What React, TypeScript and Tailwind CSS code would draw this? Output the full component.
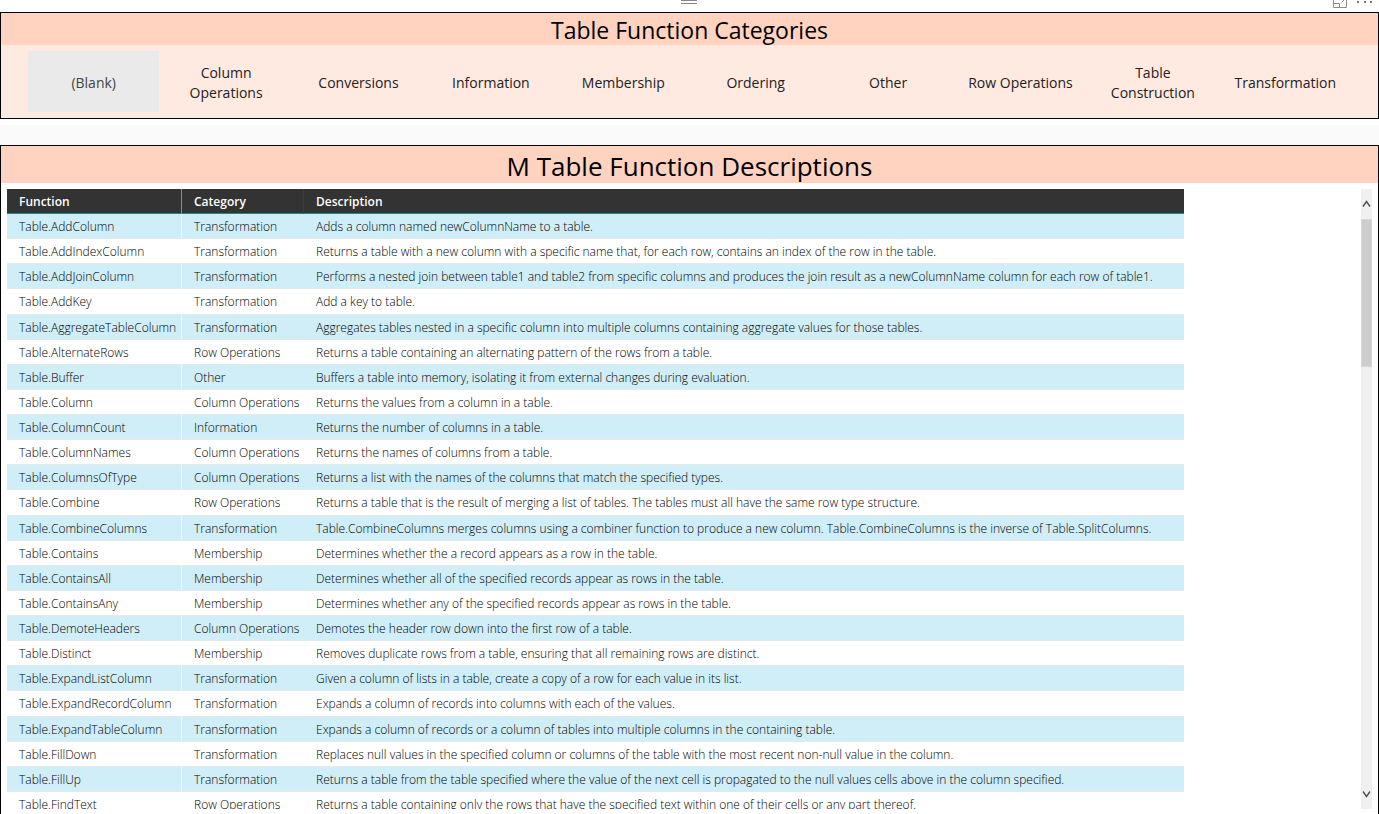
import { useState } from "react";

const categories = [
  "(Blank)",
  "Column Operations",
  "Conversions",
  "Information",
  "Membership",
  "Ordering",
  "Other",
  "Row Operations",
  "Table Construction",
  "Transformation",
];

const functions: [string, string, string][] = [
  ["Table.AddColumn", "Transformation", "Adds a column named newColumnName to a table."],
  ["Table.AddIndexColumn", "Transformation", "Returns a table with a new column with a specific name that, for each row, contains an index of the row in the table."],
  ["Table.AddJoinColumn", "Transformation", "Performs a nested join between table1 and table2 from specific columns and produces the join result as a newColumnName column for each row of table1."],
  ["Table.AddKey", "Transformation", "Add a key to table."],
  ["Table.AggregateTableColumn", "Transformation", "Aggregates tables nested in a specific column into multiple columns containing aggregate values for those tables."],
  ["Table.AlternateRows", "Row Operations", "Returns a table containing an alternating pattern of the rows from a table."],
  ["Table.Buffer", "Other", "Buffers a table into memory, isolating it from external changes during evaluation."],
  ["Table.Column", "Column Operations", "Returns the values from a column in a table."],
  ["Table.ColumnCount", "Information", "Returns the number of columns in a table."],
  ["Table.ColumnNames", "Column Operations", "Returns the names of columns from a table."],
  ["Table.ColumnsOfType", "Column Operations", "Returns a list with the names of the columns that match the specified types."],
  ["Table.Combine", "Row Operations", "Returns a table that is the result of merging a list of tables. The tables must all have the same row type structure."],
  ["Table.CombineColumns", "Transformation", "Table.CombineColumns merges columns using a combiner function to produce a new column. Table.CombineColumns is the inverse of Table.SplitColumns."],
  ["Table.Contains", "Membership", "Determines whether the a record appears as a row in the table."],
  ["Table.ContainsAll", "Membership", "Determines whether all of the specified records appear as rows in the table."],
  ["Table.ContainsAny", "Membership", "Determines whether any of the specified records appear as rows in the table."],
  ["Table.DemoteHeaders", "Column Operations", "Demotes the header row down into the first row of a table."],
  ["Table.Distinct", "Membership", "Removes duplicate rows from a table, ensuring that all remaining rows are distinct."],
  ["Table.ExpandListColumn", "Transformation", "Given a column of lists in a table, create a copy of a row for each value in its list."],
  ["Table.ExpandRecordColumn", "Transformation", "Expands a column of records into columns with each of the values."],
  ["Table.ExpandTableColumn", "Transformation", "Expands a column of records or a column of tables into multiple columns in the containing table."],
  ["Table.FillDown", "Transformation", "Replaces null values in the specified column or columns of the table with the most recent non-null value in the column."],
  ["Table.FillUp", "Transformation", "Returns a table from the table specified where the value of the next cell is propagated to the null values cells above in the column specified."],
  ["Table.FindText", "Row Operations", "Returns a table containing only the rows that have the specified text within one of their cells or any part thereof."],
];

function VisualHeader() {
  return (
    <div className="grid h-3 shrink-0 grid-cols-3 items-start bg-white">
      <span />
      <svg className="justify-self-center" width="16" height="4" viewBox="0 0 16 4" aria-hidden="true">
        <path d="M0 .5h16M0 3.5h16" stroke="#8a8488" />
      </svg>
      <div className="flex justify-end gap-2.5 pr-1.5">
        <button type="button" aria-label="Focus mode" className="h-2">
          <svg width="14" height="8" viewBox="0 0 14 8" fill="none" stroke="#8c8c8c">
            <path d="M.5 0v7.5h13V0M.5 3.5h6v4M8.5 2.5l3-3" />
          </svg>
        </button>
        <button type="button" aria-label="More options" className="h-2">
          <svg width="16" height="8" viewBox="0 0 16 8" fill="#777777">
            <rect x="0" y="1" width="2" height="2" />
            <rect x="7" y="1" width="2" height="2" />
            <rect x="13" y="1" width="2" height="2" />
          </svg>
        </button>
      </div>
    </div>
  );
}

function CategorySlicer() {
  const [selected, setSelected] = useState("(Blank)");
  return (
    <section className="shrink-0 border border-black bg-[#ffeae1]">
      <h2 className="h-8 bg-[#ffd3c0] text-center text-[23px] leading-[34px] text-black">Table Function Categories</h2>
      <div className="grid grid-cols-10 gap-px px-[27px] pt-1.5 pb-1.5">
        {categories.map((name) => (
          <button
            key={name}
            type="button"
            aria-pressed={name === selected}
            onClick={() => setSelected(name)}
            className={
              "flex h-[61px] items-center justify-center px-2 pt-[3px] text-center text-sm leading-5 " +
              (name === selected ? "bg-[#eaeaea] text-[#444444]" : "text-[#212121]")
            }
          >
            {name}
          </button>
        ))}
      </div>
    </section>
  );
}

function FunctionTable() {
  return (
    <table className="w-[1177px] shrink-0 table-fixed border-separate border-spacing-0 self-start text-left text-xs font-light text-black">
      <colgroup>
        <col className="w-[175px]" />
        <col className="w-[122px]" />
        <col />
      </colgroup>
      <thead className="h-[25px]">
        <tr className="bg-[#333333] text-white">
          <th className="border-r border-b border-r-[#8a8a8a] border-b-[#1b8c80] px-3 pt-0.5 pb-0 font-semibold">Function</th>
          <th className="border-r border-b border-r-[#3d3d3d] border-b-[#1b8c80] px-3 pt-0.5 pb-0 font-semibold">Category</th>
          <th className="border-b border-[#1b8c80] px-3 pt-0.5 pb-0 font-semibold">Description</th>
        </tr>
      </thead>
      <tbody className="h-[603px]">
        {functions.map(([name, category, description]) => (
          <tr key={name} className="whitespace-nowrap odd:bg-[#d0eef7]">
            <td className="border-r border-b border-r-white/50 border-b-[#e6e9ea] px-3 pt-0.5 pb-0">{name}</td>
            <td className="border-b border-[#e6e9ea] px-3 pt-0.5 pb-0">{category}</td>
            <td className="border-b border-[#e6e9ea] px-3 pt-0.5 pb-0">{description}</td>
          </tr>
        ))}
      </tbody>
    </table>
  );
}

function ScrollBar() {
  return (
    <div className="flex w-[11px] shrink-0 flex-col bg-[#f0f0f0]">
      <button type="button" aria-label="Scroll up" className="flex h-[30px] items-center justify-center">
        <svg width="9" height="8" viewBox="0 0 9 8" fill="none" stroke="#505050" strokeWidth="1.4">
          <path d="M1 6.5 4.5 1.5l3.5 5" />
        </svg>
      </button>
      <div className="flex-1">
        <div className="h-[148px] border border-[#d8d8d8] bg-[#cdcdcd]" />
      </div>
      <button type="button" aria-label="Scroll down" className="flex h-[30px] items-center justify-center">
        <svg width="9" height="8" viewBox="0 0 9 8" fill="none" stroke="#505050" strokeWidth="1.4">
          <path d="M1 1.5l3.5 5 3.5-5" />
        </svg>
      </button>
    </div>
  );
}

export default function App() {
  return (
    <main className="flex h-screen flex-col overflow-hidden bg-white font-['Open_Sans','Noto_Sans',sans-serif]">
      <VisualHeader />
      <CategorySlicer />
      <div className="mt-1.5 h-5 shrink-0 bg-[#fafafa]" />
      <section className="flex min-h-0 flex-1 flex-col border-x border-t border-black bg-white">
        <h2 className="h-[37px] shrink-0 bg-[#ffd3c0] text-center text-[26px] leading-10 text-black">
          M Table Function Descriptions
        </h2>
        <div className="mt-1.5 mb-[5px] flex min-h-0 flex-1 justify-between overflow-hidden pr-1.5 pl-1.5">
          <FunctionTable />
          <ScrollBar />
        </div>
      </section>
    </main>
  );
}
